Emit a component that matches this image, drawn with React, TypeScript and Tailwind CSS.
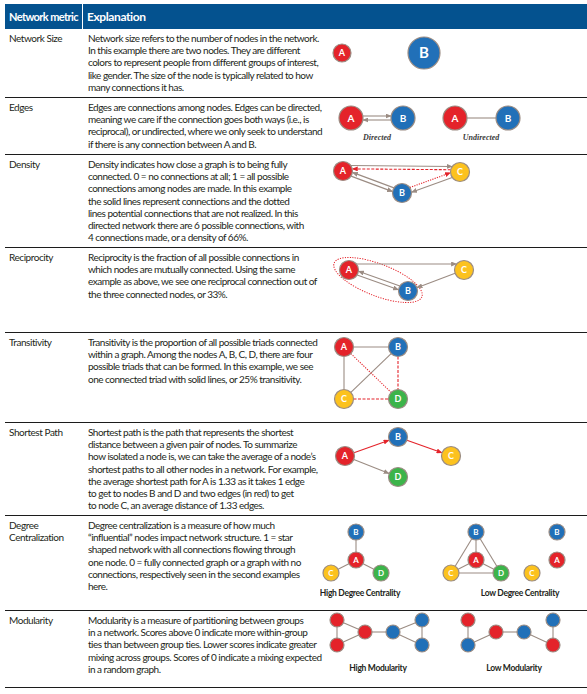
import React from 'react';

type Pt = [number, number];

const RED = '#e4232a';
const BLUE = '#2170b8';
const YELLOW = '#fcc21e';
const GREEN = '#3cb44a';
const EDGE = '#9b8c83';

// line between two node rims, optionally shifted sideways (for paired arrows)
function seg(a: Pt, b: Pt, ra: number, rb: number, off = 0) {
  const dx = b[0] - a[0];
  const dy = b[1] - a[1];
  const L = Math.hypot(dx, dy);
  const ux = dx / L;
  const uy = dy / L;
  const px = -uy * off;
  const py = ux * off;
  const sa = Math.sqrt(Math.max(ra * ra - off * off, 0));
  const sb = Math.sqrt(Math.max(rb * rb - off * off, 0));
  return { x1: a[0] + ux * sa + px, y1: a[1] + uy * sa + py, x2: b[0] - ux * sb + px, y2: b[1] - uy * sb + py };
}

function Defs({ id }: { id: string }) {
  return (
    <defs>
      <marker id={`${id}-g`} markerWidth="6" markerHeight="5" refX="5.5" refY="2.5" orient="auto" markerUnits="userSpaceOnUse">
        <path d="M0,0 L6,2.5 L0,5 z" fill={EDGE} />
      </marker>
      <marker id={`${id}-r`} markerWidth="6" markerHeight="5" refX="5.5" refY="2.5" orient="auto" markerUnits="userSpaceOnUse">
        <path d="M0,0 L6,2.5 L0,5 z" fill={RED} />
      </marker>
    </defs>
  );
}

function Node({ p, r, fill, label, size }: { p: Pt; r: number; fill: string; label?: string; size?: number }) {
  return (
    <g>
      <circle cx={p[0]} cy={p[1]} r={r} fill={fill} stroke={EDGE} strokeWidth={1.2} />
      {label && (
        <text
          x={p[0]}
          y={p[1] + (size ?? 9) * 0.36}
          textAnchor="middle"
          fill="#fff"
          fontSize={size ?? 9}
          fontWeight={700}
          fontFamily="Lato, 'Liberation Sans', sans-serif"
        >
          {label}
        </text>
      )}
    </g>
  );
}

function Edge({
  a, b, ra, rb, off = 0, color = EDGE, dash, arrow, id,
}: { a: Pt; b: Pt; ra: number; rb: number; off?: number; color?: string; dash?: string; arrow?: boolean; id?: string }) {
  const s = seg(a, b, ra, rb, off);
  const m = arrow ? `url(#${id}-${color === RED ? 'r' : 'g'})` : undefined;
  return <line {...s} stroke={color} strokeWidth={1.1} strokeDasharray={dash} markerEnd={m} />;
}

function Pic({ top, h, children }: { top: number; h: number; children: React.ReactNode }) {
  return (
    <svg width={267} height={h} viewBox={`320 ${top} 267 ${h}`} className="block shrink-0">
      {children}
    </svg>
  );
}

function SizePic() {
  return (
    <Pic top={29} h={68}>
      <Node p={[342, 53]} r={9} fill={RED} label="A" size={9} />
      <Node p={[424, 53]} r={16} fill={BLUE} label="B" size={15} />
    </Pic>
  );
}

function EdgesPic() {
  const A: Pt = [351, 119];
  const B: Pt = [403, 119];
  const A2: Pt = [455, 119];
  const B2: Pt = [508, 119];
  return (
    <Pic top={98} h={56}>
      <Defs id="ed" />
      <Edge id="ed" a={A} b={B} ra={12} rb={12} off={-2} arrow />
      <Edge id="ed" a={B} b={A} ra={12} rb={12} off={-2} arrow />
      <Edge a={A2} b={B2} ra={12} rb={12} />
      <Node p={A} r={12} fill={RED} label="A" size={10} />
      <Node p={B} r={12} fill={BLUE} label="B" size={10} />
      <Node p={A2} r={12} fill={RED} label="A" size={10} />
      <Node p={B2} r={12} fill={BLUE} label="B" size={10} />
      <text x={377} y={141} textAnchor="middle" fontSize={8} fontStyle="italic" fontWeight={700} fill="#3b3b3b" fontFamily="'Liberation Serif', serif">
        Directed
      </text>
      <text x={481} y={141} textAnchor="middle" fontSize={8} fontStyle="italic" fontWeight={700} fill="#3b3b3b" fontFamily="'Liberation Serif', serif">
        Undirected
      </text>
    </Pic>
  );
}

function DensityPic() {
  const A: Pt = [343, 172];
  const B: Pt = [402, 194];
  const C: Pt = [460, 173];
  const r = 9.5;
  return (
    <Pic top={155} h={92}>
      <Defs id="dn" />
      <Edge id="dn" a={A} b={C} ra={r} rb={r} off={-5.5} arrow />
      <Edge id="dn" a={C} b={A} ra={r} rb={r} off={2.2} color={RED} dash="3,1.5" arrow />
      <Edge id="dn" a={A} b={B} ra={r} rb={r} off={2} arrow />
      <Edge id="dn" a={B} b={A} ra={r} rb={r} off={2} arrow />
      <Edge id="dn" a={C} b={B} ra={r} rb={r} off={-2.5} arrow />
      <Edge id="dn" a={B} b={C} ra={r} rb={r} off={-2.5} color={RED} dash="1.2,1.2" arrow />
      <Node p={A} r={r} fill={RED} label="A" size={9} />
      <Node p={B} r={r} fill={BLUE} label="B" size={9} />
      <Node p={C} r={r} fill={YELLOW} label="C" size={9} />
    </Pic>
  );
}

function ReciprocityPic() {
  const A: Pt = [349, 271];
  const B: Pt = [408, 292];
  const C: Pt = [464, 271];
  const r = 9.5;
  return (
    <Pic top={248} h={84}>
      <Defs id="rc" />
      <ellipse cx={378} cy={281} rx={47} ry={16} transform="rotate(21 378 281)" fill="none" stroke={RED} strokeWidth={1} strokeDasharray="1.2,1.3" />
      <Edge id="rc" a={A} b={C} ra={r} rb={r} off={-6} arrow />
      <Edge id="rc" a={A} b={B} ra={r} rb={r} off={2} arrow />
      <Edge id="rc" a={B} b={A} ra={r} rb={r} off={2} arrow />
      <Edge id="rc" a={C} b={B} ra={r} rb={r} arrow />
      <Node p={A} r={r} fill={RED} label="A" size={9} />
      <Node p={B} r={r} fill={BLUE} label="B" size={9} />
      <Node p={C} r={r} fill={YELLOW} label="C" size={9} />
    </Pic>
  );
}

function TransitivityPic() {
  const A: Pt = [344, 348];
  const B: Pt = [398, 348];
  const C: Pt = [344, 400];
  const D: Pt = [398, 400];
  const r = 9.5;
  return (
    <Pic top={333} h={89}>
      <Edge a={A} b={B} ra={r} rb={r} />
      <Edge a={A} b={C} ra={r} rb={r} />
      <Edge a={C} b={B} ra={r} rb={r} />
      <Edge a={A} b={D} ra={r} rb={r} color={RED} dash="1.2,1.3" />
      <Edge a={B} b={D} ra={r} rb={r} color={RED} dash="3,1.5" />
      <Edge a={C} b={D} ra={r} rb={r} color={RED} dash="3,1.5" />
      <Node p={A} r={r} fill={RED} label="A" size={9} />
      <Node p={B} r={r} fill={BLUE} label="B" size={9} />
      <Node p={C} r={r} fill={YELLOW} label="C" size={9} />
      <Node p={D} r={r} fill={GREEN} label="D" size={9} />
    </Pic>
  );
}

function ShortestPic() {
  const A: Pt = [345, 457];
  const B: Pt = [398, 438];
  const C: Pt = [451, 457];
  const D: Pt = [398, 478];
  const r = 9.5;
  return (
    <Pic top={423} h={92}>
      <Defs id="sp" />
      <Edge id="sp" a={A} b={B} ra={r} rb={r} color={RED} arrow />
      <Edge id="sp" a={B} b={C} ra={r} rb={r} color={RED} arrow />
      <Edge id="sp" a={A} b={D} ra={r} rb={r} arrow />
      <Node p={A} r={r} fill={RED} label="A" size={9} />
      <Node p={B} r={r} fill={BLUE} label="B" size={9} />
      <Node p={C} r={r} fill={YELLOW} label="C" size={9} />
      <Node p={D} r={r} fill={GREEN} label="D" size={9} />
    </Pic>
  );
}

function CaptionText({ x, y, children }: { x: number; y: number; children: React.ReactNode }) {
  return (
    <text x={x} y={y} textAnchor="middle" fontSize={8.5} fontWeight={700} fill="#231f20" letterSpacing={-0.3} fontFamily="Lato, 'Liberation Sans', sans-serif">
      {children}
    </text>
  );
}

function DegreePic() {
  const r = 8;
  const hb: Pt = [356, 533];
  const ha: Pt = [356, 561];
  const hc: Pt = [331, 574];
  const hd: Pt = [381, 574];
  const lb: Pt = [476, 533];
  const la: Pt = [476, 561];
  const lc: Pt = [451, 574];
  const ld: Pt = [501, 574];
  return (
    <Pic top={516} h={94}>
      <Edge a={hb} b={ha} ra={r} rb={r} />
      <Edge a={ha} b={hc} ra={r} rb={r} />
      <Edge a={ha} b={hd} ra={r} rb={r} />
      <Edge a={lb} b={la} ra={r} rb={r} />
      <Edge a={lb} b={lc} ra={r} rb={r} />
      <Edge a={lb} b={ld} ra={r} rb={r} />
      <Edge a={la} b={lc} ra={r} rb={r} />
      <Edge a={la} b={ld} ra={r} rb={r} />
      <Edge a={lc} b={ld} ra={r} rb={r} />
      <Node p={hb} r={r} fill={BLUE} label="B" size={8} />
      <Node p={ha} r={r} fill={RED} label="A" size={8} />
      <Node p={hc} r={r} fill={YELLOW} label="C" size={8} />
      <Node p={hd} r={r} fill={GREEN} label="D" size={8} />
      <Node p={lb} r={r} fill={BLUE} label="B" size={8} />
      <Node p={la} r={r} fill={RED} label="A" size={8} />
      <Node p={lc} r={r} fill={YELLOW} label="C" size={8} />
      <Node p={ld} r={r} fill={GREEN} label="D" size={8} />
      <Node p={[557, 533]} r={r} fill={BLUE} label="B" size={8} />
      <Node p={[557, 561]} r={r} fill={RED} label="A" size={8} />
      <Node p={[532, 574]} r={r} fill={YELLOW} label="C" size={8} />
      <CaptionText x={360} y={597}>High Degree Centrality</CaptionText>
      <CaptionText x={520} y={597}>Low Degree Centrality</CaptionText>
    </Pic>
  );
}

function ModularityPic() {
  const r = 7;
  const h1: Pt = [337, 621];
  const h2: Pt = [337, 646];
  const h3: Pt = [365, 633];
  const h4: Pt = [393, 633];
  const h5: Pt = [422, 621];
  const h6: Pt = [422, 646];
  const l1: Pt = [468, 621];
  const l2: Pt = [468, 646];
  const l3: Pt = [496, 633];
  const l4: Pt = [524, 633];
  const l5: Pt = [553, 621];
  const l6: Pt = [553, 646];
  return (
    <Pic top={611} h={76}>
      <Edge a={h1} b={h2} ra={r} rb={r} />
      <Edge a={h1} b={h3} ra={r} rb={r} />
      <Edge a={h2} b={h3} ra={r} rb={r} />
      <Edge a={h3} b={h4} ra={r} rb={r} />
      <Edge a={h4} b={h5} ra={r} rb={r} />
      <Edge a={h4} b={h6} ra={r} rb={r} />
      <Edge a={h5} b={h6} ra={r} rb={r} />
      <Edge a={l1} b={l2} ra={r} rb={r} />
      <Edge a={l2} b={l3} ra={r} rb={r} />
      <Edge a={l3} b={l4} ra={r} rb={r} />
      <Edge a={l4} b={l6} ra={r} rb={r} />
      <Edge a={l5} b={l6} ra={r} rb={r} />
      <Node p={h1} r={r} fill={RED} />
      <Node p={h2} r={r} fill={RED} />
      <Node p={h3} r={r} fill={RED} />
      <Node p={h4} r={r} fill={BLUE} />
      <Node p={h5} r={r} fill={BLUE} />
      <Node p={h6} r={r} fill={BLUE} />
      <Node p={l1} r={r} fill={RED} />
      <Node p={l2} r={r} fill={BLUE} />
      <Node p={l3} r={r} fill={RED} />
      <Node p={l4} r={r} fill={BLUE} />
      <Node p={l5} r={r} fill={BLUE} />
      <Node p={l6} r={r} fill={RED} />
      <CaptionText x={378} y={672}>High Modularity</CaptionText>
      <CaptionText x={514} y={672}>Low Modularity</CaptionText>
    </Pic>
  );
}

const rows = [
  {
    metric: ['Network Size'],
    h: 'h-[68px]',
    lines: [
      'Network size refers to the number of nodes in the network.',
      'In this example there are two nodes. They are different',
      'colors to represent people from different groups of interest,',
      'like gender. The size of the node is typically related to how',
      'many connections it has.',
    ],
    pic: <SizePic />,
  },
  {
    metric: ['Edges'],
    h: 'h-[57px]',
    lines: [
      'Edges are connections among nodes. Edges can be directed,',
      'meaning we care if the connection goes both ways (i.e., is',
      'reciprocal), or undirected, where we only seek to understand',
      'if there is any connection between A and B.',
    ],
    pic: <EdgesPic />,
  },
  {
    metric: ['Density'],
    h: 'h-[93px]',
    lines: [
      'Density indicates how close a graph is to being fully',
      'connected. 0 = no connections at all; 1 = all possible',
      'connections among nodes are made. In this example',
      'the solid lines represent connections and the dotted',
      'lines potential connections that are not realized. In this',
      'directed network there are 6 possible connections, with',
      '4 connections made, or a density of 66%.',
    ],
    pic: <DensityPic />,
  },
  {
    metric: ['Reciprocity'],
    h: 'h-[85px]',
    lines: [
      'Reciprocity is the fraction of all possible connections in',
      'which nodes are mutually connected. Using the same',
      'example as above, we see one reciprocal connection out of',
      'the three connected nodes, or 33%.',
    ],
    pic: <ReciprocityPic />,
  },
  {
    metric: ['Transitivity'],
    h: 'h-[90px]',
    lines: [
      'Transitivity is the proportion of all possible triads connected',
      'within a graph. Among the nodes A, B, C, D, there are four',
      'possible triads that can be formed. In this example, we see',
      'one connected triad with solid lines, or 25% transitivity.',
    ],
    pic: <TransitivityPic />,
  },
  {
    metric: ['Shortest Path'],
    h: 'h-[93px]',
    lines: [
      'Shortest path is the path that represents the shortest',
      'distance between a given pair of nodes. To summarize',
      'how isolated a node is, we can take the average of a node\u2019s',
      'shortest paths to all other nodes in a network. For example,',
      'the average shortest path for A is 1.33 as it takes 1 edge',
      'to get to nodes B and D and two edges (in red) to get',
      'to node C, an average distance of 1.33 edges.',
    ],
    pic: <ShortestPic />,
  },
  {
    metric: ['Degree', 'Centralization'],
    h: 'h-[95px]',
    lines: [
      'Degree centralization is a measure of how much',
      '\u201cinfluential\u201d nodes impact network structure. 1 = star',
      'shaped network with all connections flowing through',
      'one node. 0 = fully connected graph or a graph with no',
      'connections, respectively seen in the second examples',
      'here.',
    ],
    pic: <DegreePic />,
  },
  {
    metric: ['Modularity'],
    h: 'h-[78px]',
    lines: [
      'Modularity is a measure of partitioning between groups',
      'in a network. Scores above 0 indicate more within-group',
      'ties than between group ties. Lower scores indicate greater',
      'mixing across groups. Scores of 0 indicate a mixing expected',
      'in a random graph.',
    ],
    pic: <ModularityPic />,
  },
];

export default function App() {
  return (
    <main className="w-[587px] h-[694px] bg-white overflow-hidden text-[#231f20] font-['Lato','Liberation_Sans',sans-serif]">
      <div className="ml-[5px] pt-[4px] w-[582px]">
        {/* header bar */}
        <div className="flex h-[25px] text-white font-bold leading-[25px] whitespace-nowrap">
          <div className="w-[77px] bg-[#04528f] pl-[4px] text-[11px] tracking-[-0.6px]">Network metric</div>
          <div className="w-[1px] bg-white" />
          <div className="flex-1 bg-[#04528f] pl-[4px] text-[12px] tracking-[-0.4px]">Explanation</div>
        </div>

        {rows.map((row, i) => (
          <div
            key={i}
            className={`flex ${row.h} ${i > 0 ? 'border-t border-[#1c1c1c]' : ''} ${i === rows.length - 1 ? 'border-b border-[#1c1c1c]' : ''}`}
          >
            <div className="w-[78px] shrink-0 pl-[4px] pt-[3px] text-[10px] leading-[12px] tracking-[-0.45px]">
              {row.metric.map((m) => (
                <div key={m}>{m}</div>
              ))}
            </div>
            <div className="w-[237px] shrink-0 pl-[5px] pt-[3px] text-[10px] leading-[12.2px] tracking-[-0.5px] whitespace-nowrap">
              {row.lines.map((l) => (
                <div key={l}>{l}</div>
              ))}
            </div>
            <div className={i === 0 ? '' : '-mt-[1px]'}>{row.pic}</div>
          </div>
        ))}
      </div>
    </main>
  );
}
